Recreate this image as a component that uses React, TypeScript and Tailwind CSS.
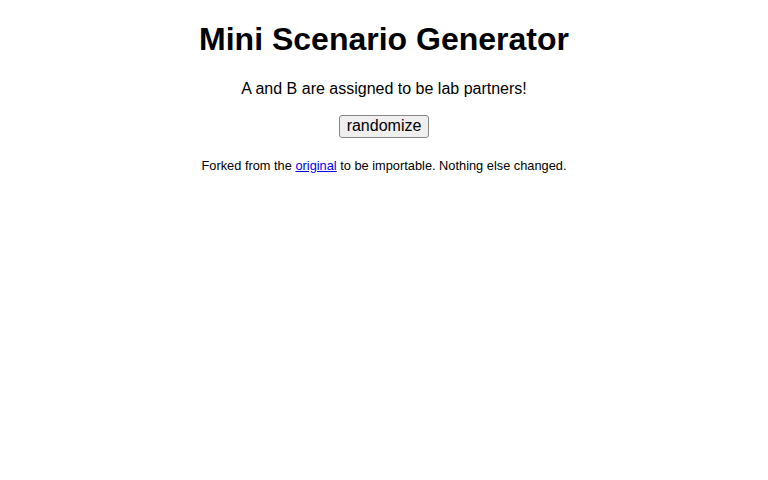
import { useState } from 'react';

const people = ['A', 'B', 'C', 'D'];
const roles = ['lab partners', 'roommates', 'rivals', 'co-founders'];

function pick<T>(list: T[]) {
  return list[Math.floor(Math.random() * list.length)];
}

export default function App() {
  const [scenario, setScenario] = useState({ a: 'A', b: 'B', role: 'lab partners' });

  const randomize = () => {
    const a = pick(people);
    const rest = people.filter((p) => p !== a);
    setScenario({ a, b: pick(rest), role: pick(roles) });
  };

  return (
    <div className="min-h-screen bg-white text-center text-black font-['Liberation_Sans',Arial,sans-serif]">
      <h1 className="pt-[21.44px] mb-[21.44px] text-[32px] leading-[36.8px] font-bold">Mini Scenario Generator</h1>
      <p className="text-base leading-[18.4px]">
        {scenario.a} and {scenario.b} are assigned to be {scenario.role}!
      </p>
      <div className="mt-[17px] leading-[18.4px]">
        <button
          onClick={randomize}
          className="h-[23px] px-[7px] text-base leading-[18.4px] bg-[#efefef] border border-[#858585] rounded-[3px] hover:bg-[#e5e5e5]"
        >
          randomize
        </button>
      </div>
      <p className="mt-5 text-[12.8px] leading-[15px]">
        Forked from the{' '}
        <a href="#" className="text-[#0000ee] underline">
          original
        </a>{' '}
        to be importable. Nothing else changed.
      </p>
    </div>
  );
}
